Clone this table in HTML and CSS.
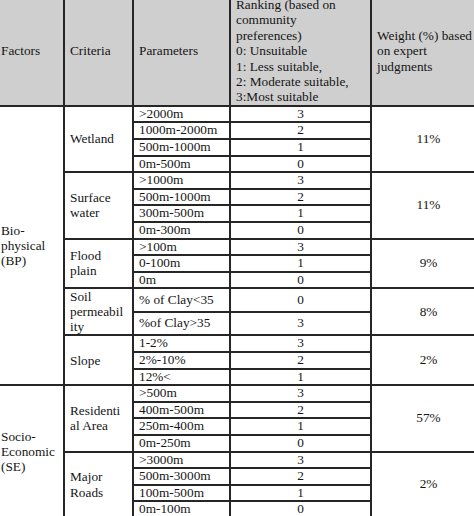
FILE: index.html
```html
<!DOCTYPE html>
<html>
<head>
<meta charset="utf-8">
<link rel="stylesheet" href="styles.css">
</head>
<body>
<table class="grid">
  <colgroup>
    <col class="c-factor">
    <col class="c-crit">
    <col class="c-param">
    <col class="c-rank">
    <col class="c-weight">
  </colgroup>
  <thead>
    <tr>
      <th>Factors</th>
      <th>Criteria</th>
      <th>Parameters</th>
      <th>Ranking (based on<br>community<br>preferences)<br>0: Unsuitable<br>1: Less suitable,<br>2: Moderate suitable,<br>3:Most suitable</th>
      <th>Weight (%) based<br>on expert<br>judgments</th>
    </tr>
  </thead>
  <tbody>
    <tr>
      <td class="factor" rowspan="16">Bio-<br>physical<br>(BP)</td>
      <td class="crit" rowspan="4">Wetland</td>
      <td class="param">&gt;2000m</td><td class="rank">3</td>
      <td class="weight" rowspan="4">11%</td>
    </tr>
    <tr><td class="param">1000m-2000m</td><td class="rank">2</td></tr>
    <tr><td class="param">500m-1000m</td><td class="rank">1</td></tr>
    <tr><td class="param">0m-500m</td><td class="rank">0</td></tr>

    <tr>
      <td class="crit" rowspan="4">Surface<br>water</td>
      <td class="param">&gt;1000m</td><td class="rank">3</td>
      <td class="weight" rowspan="4">11%</td>
    </tr>
    <tr><td class="param">500m-1000m</td><td class="rank">2</td></tr>
    <tr><td class="param">300m-500m</td><td class="rank">1</td></tr>
    <tr><td class="param">0m-300m</td><td class="rank">0</td></tr>

    <tr>
      <td class="crit" rowspan="3">Flood<br>plain</td>
      <td class="param">&gt;100m</td><td class="rank">3</td>
      <td class="weight" rowspan="3">9%</td>
    </tr>
    <tr><td class="param">0-100m</td><td class="rank">1</td></tr>
    <tr><td class="param">0m</td><td class="rank">0</td></tr>

    <tr>
      <td class="crit tight" rowspan="2">Soil<br>permeabil<br>ity</td>
      <td class="param">% of Clay&lt;35</td><td class="rank">0</td>
      <td class="weight" rowspan="2">8%</td>
    </tr>
    <tr><td class="param">%of Clay&gt;35</td><td class="rank">3</td></tr>

    <tr>
      <td class="crit" rowspan="3">Slope</td>
      <td class="param">1-2%</td><td class="rank">3</td>
      <td class="weight" rowspan="3">2%</td>
    </tr>
    <tr><td class="param">2%-10%</td><td class="rank">2</td></tr>
    <tr><td class="param">12%&lt;</td><td class="rank">1</td></tr>

    <tr>
      <td class="factor" rowspan="8">Socio-<br>Economic<br>(SE)</td>
      <td class="crit" rowspan="4">Residenti<br>al Area</td>
      <td class="param">&gt;500m</td><td class="rank">3</td>
      <td class="weight" rowspan="4">57%</td>
    </tr>
    <tr><td class="param">400m-500m</td><td class="rank">2</td></tr>
    <tr><td class="param">250m-400m</td><td class="rank">1</td></tr>
    <tr><td class="param">0m-250m</td><td class="rank">0</td></tr>

    <tr>
      <td class="crit" rowspan="4">Major<br>Roads</td>
      <td class="param">&gt;3000m</td><td class="rank">3</td>
      <td class="weight" rowspan="4">2%</td>
    </tr>
    <tr><td class="param">500m-3000m</td><td class="rank">2</td></tr>
    <tr><td class="param">100m-500m</td><td class="rank">1</td></tr>
    <tr><td class="param">0m-100m</td><td class="rank">0</td></tr>
  </tbody>
</table>
</body>
</html>
```

FILE: styles.css
```css
html, body {
  margin: 0;
  padding: 0;
  background: #ffffff;
  overflow: hidden;
}

body {
  width: 474px;
  height: 516px;
}

.grid {
  border-collapse: collapse;
  table-layout: fixed;
  width: 491px;
  margin: -5px 0 0 -6px;
  font-family: "Liberation Serif", "Times New Roman", serif;
  font-size: 13.3px;
  color: #151515;
}

.c-factor { width: 69px; }
.c-crit { width: 69px; }
.c-param { width: 97px; }
.c-rank { width: 141px; }
.c-weight { width: 115px; }

.grid th,
.grid td {
  border: 2px solid #262626;
  padding: 0 5px;
  vertical-align: middle;
  white-space: nowrap;
  overflow: hidden;
}

.grid th {
  background: #cfcfcf;
  font-weight: normal;
  text-align: left;
  line-height: 15.4px;
}

.grid td {
  line-height: 14.6px;
  text-align: left;
}

.grid td.crit {
  line-height: 15.4px;
}

.grid td.crit.tight {
  line-height: 15px;
}

.grid td.factor {
  line-height: 15px;
}

.grid td.rank,
.grid td.weight {
  text-align: center;
}
```
